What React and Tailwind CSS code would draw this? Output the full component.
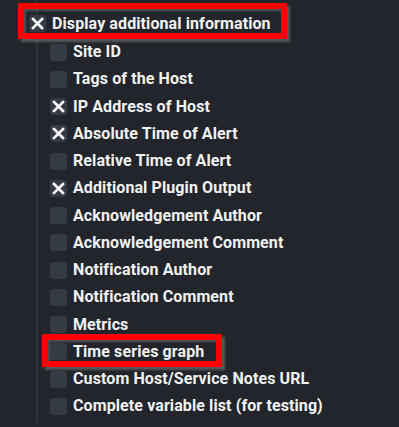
import React from 'react';

const items = [
  { label: 'Site ID', checked: false },
  { label: 'Tags of the Host', checked: false },
  { label: 'IP Address of Host', checked: true },
  { label: 'Absolute Time of Alert', checked: true },
  { label: 'Relative Time of Alert', checked: false },
  { label: 'Additional Plugin Output', checked: true },
  { label: 'Acknowledgement Author', checked: false },
  { label: 'Acknowledgement Comment', checked: false },
  { label: 'Notification Author', checked: false },
  { label: 'Notification Comment', checked: false },
  { label: 'Metrics', checked: false },
  { label: 'Time series graph', checked: false, marked: true },
  { label: 'Custom Host/Service Notes URL', checked: false },
  { label: 'Complete variable list (for testing)', checked: false },
];

const Checkbox = ({ checked }) => (
  <div className="w-[17px] h-[17px] rounded-[3px] bg-[#353b45] flex items-center justify-center flex-shrink-0">
    {checked && (
      <svg width="13" height="13" viewBox="0 0 13 13">
        <path d="M2 2 L11 11 M11 2 L2 11" stroke="#ffffff" strokeWidth="2.6" strokeLinecap="square" />
      </svg>
    )}
  </div>
);

// screenshot annotation box
const Marker = ({ className }) => (
  <div
    className={`absolute border-[6px] border-[#ff0000] pointer-events-none shadow-[3px_3px_2px_rgba(110,110,110,0.7),inset_2px_2px_2px_rgba(110,110,110,0.6)] ${className}`}
  />
);

const App = () => {
  return (
    <div
      className="w-[399px] h-[427px] bg-[#22262c] overflow-hidden text-[#f2f2f2] font-bold text-[16px] tracking-[0.1px]"
      style={{ fontFamily: 'Roboto, "Liberation Sans", sans-serif' }}
    >
      <div className="ml-[36px] border-l-2 border-[#2f343b] pt-[9px] pb-[3px]">
        {/* parent option */}
        <div className="relative -ml-[9px] h-[29px] flex items-center gap-[6px]">
          <Checkbox checked />
          <span className="leading-none">Display additional information</span>
          <Marker className="-left-[11px] -top-[6px] w-[269px] h-[36px]" />
        </div>

        {/* child options */}
        <div className="pt-[0.4px] pl-[12px]">
          {items.map((item) => (
            <div key={item.label} className="relative h-[27.25px] flex items-center gap-[6px]">
              <Checkbox checked={item.checked} />
              <span className="leading-none whitespace-nowrap">{item.label}</span>
              {item.marked && <Marker className="-left-[8px] -top-[4px] w-[180px] h-[33px]" />}
            </div>
          ))}
        </div>
      </div>
    </div>
  );
};

export default App;
